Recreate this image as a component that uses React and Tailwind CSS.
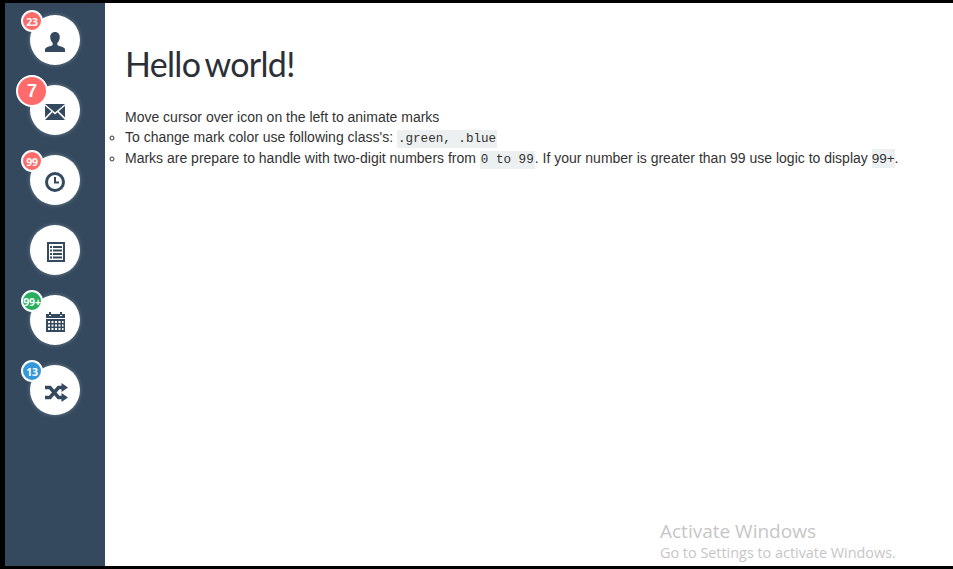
import React from 'react';

const PersonIcon = () => (
  <svg width="20" height="20" viewBox="0 0 20 20" fill="#34495e">
    <path d="M10 0c3 0 4.800 2.200 4.800 5 0 2.400-1 4.600-2.500 6v1.500c0 .8 1 1.200 3 1.800 2.500.8 4.300 1.500 4.700 2.700v3H0v-3c.4-1.200 2.200-1.900 4.700-2.700 2-.6 3-1 3-1.800V11C6.200 9.600 5.200 7.400 5.200 5 5.200 2.200 7 0 10 0z" />
  </svg>
);

const MailIcon = () => (
  <svg width="20" height="16" viewBox="0 0 20 16" fill="#34495e">
    <path d="M0 0h20L10 8.500z" />
    <path d="M0 1.800 6.300 7.200 0 13.600z" />
    <path d="M20 1.800 13.700 7.200 20 13.600z" />
    <path d="M7.500 8.300 10 10.500l2.500-2.200L20 16H0z" />
  </svg>
);

const ClockIcon = () => (
  <svg width="20" height="20" viewBox="0 0 20 20" fill="none" stroke="#34495e">
    <circle cx="10" cy="10" r="8.500" strokeWidth="3" />
    <path d="M10 5v5.500h4" strokeWidth="2" />
  </svg>
);

const ListIcon = () => (
  <svg width="18" height="20" viewBox="0 0 18 20" fill="#34495e">
    <path fillRule="evenodd" d="M0 0h18v20H0zM2 2v16h14V2z" />
    <path d="M3 4h2v2H3zM6 4h9v2H6zM3 7.500h2v2H3zM6 7.500h9v2H6zM3 11h2v2H3zM6 11h9v2H6zM3 14.500h2v2H3zM6 14.500h9v2H6z" />
  </svg>
);

const CalendarIcon = () => (
  <svg width="19" height="20" viewBox="0 0 19 20" fill="#34495e">
    <path d="M3 0h2v3H3zM14 0h2v3h-2z" />
    <path d="M0 2h3v2h2V2h9v2h2V2h3v4H0z" />
    <path d="M0 7h19v13H0z" />
    <path fill="#fff" d="M2 9h2v2H2zM5.500 9h2v2h-2zM9 9h2v2H9zM12.500 9h2v2h-2zM16 9h1.500v2H16zM2 12.500h2v2H2zM5.500 12.500h2v2h-2zM9 12.500h2v2H9zM12.500 12.500h2v2h-2zM16 12.500h1.500v2H16zM2 16h2v2H2zM5.500 16h2v2h-2zM9 16h2v2H9zM12.500 16h2v2h-2zM16 16h1.500v2H16z" />
  </svg>
);

const ShuffleIcon = () => (
  <svg width="23" height="19" viewBox="0 0 23 19">
    <path d="M0 4.500h5l8.500 10H17M0 14.500h5l8.500-10H17" fill="none" stroke="#34495e" strokeWidth="3.500" />
    <path d="M16.500 0 23 4.500 16.500 9zM16.500 10 23 14.500 16.500 19z" fill="#34495e" />
  </svg>
);

const items = [
  { icon: <PersonIcon />, mark: '23', color: 'bg-[#ff6b6b]', shift: 'pt-[4px]' },
  { icon: <MailIcon />, mark: '7', color: 'bg-[#ff6b6b]', big: true, shift: 'pt-[4px]' },
  { icon: <ClockIcon />, mark: '99', color: 'bg-[#ff6b6b]', shift: 'pt-[4px]' },
  { icon: <ListIcon />, shift: 'pt-[4px] pl-[2px]' },
  { icon: <CalendarIcon />, mark: '99+', color: 'bg-[#27ae60]', shift: 'pt-[4px]' },
  { icon: <ShuffleIcon />, mark: '13', color: 'bg-[#3498db]', shift: 'pt-[5px] pl-[3px]' },
];

const Code = ({ children }) => (
  <code className="bg-[#ecf0f1] px-[1px] py-[2px] text-[12.6px] leading-none font-['Liberation_Mono',monospace]">
    {children}
  </code>
);

export default function App() {
  return (
    <div className="relative w-[953px] h-[569px] bg-black flex pt-[3px] pb-[3px] pl-[5px] overflow-hidden font-['Liberation_Sans',Arial,sans-serif]">
      <nav className="w-[100px] bg-[#34495e] flex flex-col items-start gap-5 pt-3 pl-[25px]">
        {items.map((item, i) => (
          <div
            key={i}
            className={`relative w-[50px] h-[50px] rounded-full bg-white shadow-[0_0_4px_rgba(255,255,255,0.3)] flex items-center justify-center ${item.shift}`}
          >
            {item.icon}
            {item.mark && (
              <span
                className={
                  item.big
                    ? `absolute left-[-14px] top-[-10px] w-[32px] h-[32px] rounded-full border-2 border-white ${item.color} text-white font-bold text-[18px] flex items-center justify-center`
                    : `absolute left-[-9px] top-[-5px] w-[22px] h-[22px] rounded-full border-2 border-white ${item.color} text-white font-bold text-[10.5px] leading-none pt-[2px] tracking-[-0.2px] font-['Open_Sans',sans-serif] flex items-center justify-center`
                }
              >
                {item.mark}
              </span>
            )}
          </div>
        ))}
      </nav>

      <main className="flex-1 bg-white pl-5 pt-[36px] text-[14px] leading-[20.4px] text-[#333333]">
        <h1 className="font-['Lato',sans-serif] text-[34px] leading-[50px] tracking-[-0.7px] [word-spacing:-3px] text-[#2c2f36] mb-[18px]">
          Hello world!
        </h1>
        <p>Move cursor over icon on the left to animate marks</p>
        <ul className="list-[circle]">
          <li>
            To change mark color use following class's: <Code>.green, .blue</Code>
          </li>
          <li>
            Marks are prepare to handle with two-digit numbers from <Code>0 to 99</Code>. If your number is greater than 99 use logic to display <span className="bg-[#ecf0f1] py-[2px] text-[13.5px]">99+</span>.
          </li>
        </ul>
      </main>

      <div className="absolute left-[660px] top-[518px] text-[#c6c6c6] font-['Open_Sans',sans-serif]">
        <div className="text-[19px] leading-[26px]">Activate Windows</div>
        <div className="text-[14.4px] leading-[18px]">Go to Settings to activate Windows.</div>
      </div>
    </div>
  );
}
